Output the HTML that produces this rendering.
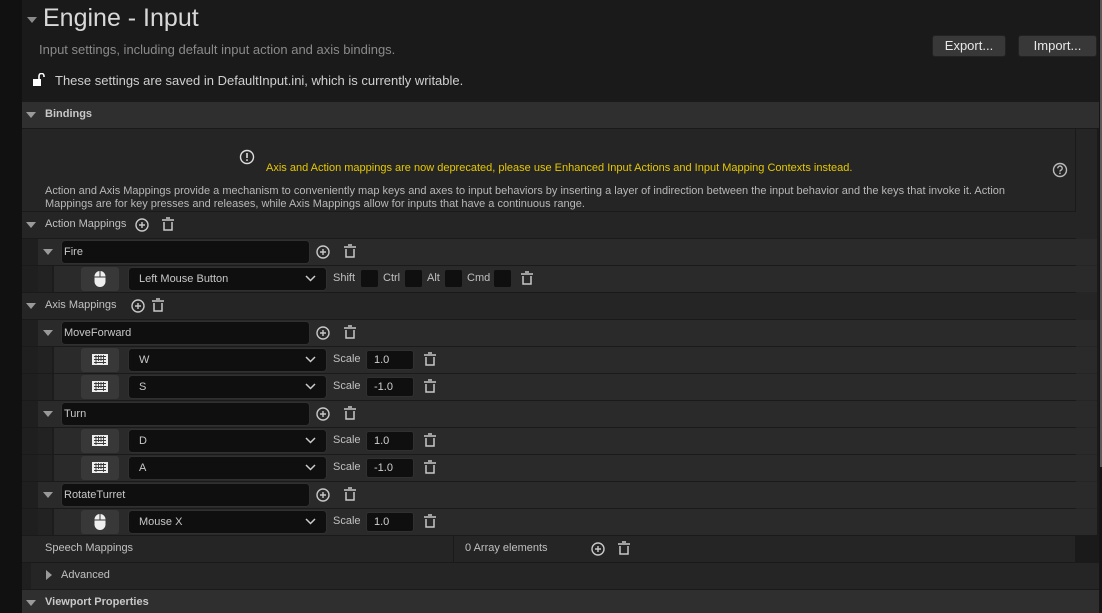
<!DOCTYPE html>
<html><head><style>
*{margin:0;padding:0;box-sizing:border-box}
body{width:1102px;height:613px;background:#1a1a1a;position:relative;overflow:hidden;font-family:"Liberation Sans",sans-serif;color:#c0c0c0;font-size:11px}
.a{position:absolute}
.row{position:absolute;left:22px;width:1075px;height:26px;background:#2a2a2a}
.rd{background:#252525}
.lbl{position:absolute;font-size:11px;color:#c0c0c0;line-height:13px}
.tri{position:absolute;width:0;height:0;border-left:5px solid transparent;border-right:5px solid transparent;border-top:6px solid #9a9a9a}
.tbox{position:absolute;left:61px;width:249px;height:24px;background:#0f0f0f;border-radius:4px;border:1px solid #303030;padding:5px 2px;color:#c8c8c8}
.kb{position:absolute;left:81px;width:38px;height:24px;background:#383838;border-radius:3px}
.dd{position:absolute;left:128px;width:199px;height:24px;background:#0f0f0f;border-radius:4px;border:1px solid #303030;padding:5px 10px;color:#c8c8c8}
.chev{position:absolute;right:10px;top:7px}
.sc{position:absolute;left:366px;width:48px;height:20px;background:#0f0f0f;border-radius:3px;border:1px solid #303030;padding:3px 7px;color:#d0d0d0}
.cb{position:absolute;width:17px;height:17px;background:#0f0f0f;border-radius:2px}
.i1{position:absolute;left:22px;width:16px;height:26px;background:#1f1f1f}
.i2{position:absolute;left:38px;width:16px;height:26px;background:#222;border-right:2px solid #1c1c1c}
</style></head><body>
<div class="a" style="left:0;top:0;width:22px;height:613px;background:#111"></div>
<div class="a" style="left:1099px;top:0;width:3px;height:613px;background:#151515"></div>
<div class="a" style="left:1100px;top:0;width:2px;height:467px;background:#5a5a5a"></div>
<div class="tri" style="left:27px;top:17px;border-top-color:#8a8a8a"></div>
<div class="a" style="left:43px;top:4px;font-size:25px;color:#d8d8d8">Engine - Input</div>
<div class="a" style="left:39px;top:42px;font-size:13px;color:#8a8a8a">Input settings, including default input action and axis bindings.</div>
<div class="a" style="left:32px;top:73px"><svg width="14" height="14" viewBox="0 0 14 14"><rect x="1" y="6" width="8" height="7" fill="#fff"/><path d="M7 6V3a2.5 2.5 0 0 1 5 0v1" stroke="#fff" stroke-width="1.6" fill="none"/></svg></div>
<div class="a" style="left:55px;top:73px;font-size:13px;color:#d0d0d0">These settings are saved in DefaultInput.ini, which is currently writable.</div>
<div class="a" style="left:932px;top:35px;width:74px;height:22px;background:#383838;border:1px solid #222;border-radius:3px;color:#e8e8e8;font-size:13px;text-align:center;line-height:20px">Export...</div>
<div class="a" style="left:1018px;top:35px;width:79px;height:22px;background:#383838;border:1px solid #222;border-radius:3px;color:#e8e8e8;font-size:13px;text-align:center;line-height:20px">Import...</div>

<div class="a" style="left:22px;top:102px;width:1077px;height:26px;background:#2f2f2f"></div>
<div class="tri" style="left:26px;top:112px"></div>
<div class="a" style="left:45px;top:108px;font-weight:bold;color:#c8c8c8">Bindings</div>

<div class="a" style="left:22px;top:129px;width:1053px;height:82px;background:#252525"></div>
<div class="a" style="left:1076px;top:129px;width:21px;height:406px;background:#252525"></div>
<div class="a" style="left:239px;top:149px"><svg width="16" height="16" viewBox="0 0 16 16"><circle cx="8" cy="8" r="6.5" stroke="#ddd" stroke-width="1.4" fill="none"/><rect x="7.2" y="4" width="1.6" height="5" fill="#ddd"/><rect x="7.2" y="10.3" width="1.6" height="1.6" fill="#ddd"/></svg></div>
<div class="a" style="left:266px;top:162px;color:#e6c800">Axis and Action mappings are now deprecated, please use Enhanced Input Actions and Input Mapping Contexts instead.</div>
<div class="a" style="left:1052px;top:162px"><svg width="16" height="16" viewBox="0 0 16 16"><circle cx="8" cy="8" r="6.5" stroke="#bbb" stroke-width="1.4" fill="none"/><path d="M5.8 6.3a2.2 2.2 0 1 1 2.9 2c-.6.3-.7.6-.7 1.3" stroke="#bbb" stroke-width="1.4" fill="none"/><rect x="7.2" y="10.6" width="1.5" height="1.5" fill="#bbb"/></svg></div>
<div class="a" style="left:45px;top:185px;width:1010px;color:#b8b8b8;line-height:13px">Action and Axis Mappings provide a mechanism to conveniently map keys and axes to input behaviors by inserting a layer of indirection between the input behavior and the keys that invoke it. Action Mappings are for key presses and releases, while Axis Mappings allow for inputs that have a continuous range.</div>

<svg width="0" height="0" style="position:absolute"><defs>
<g id="plus"><circle cx="7" cy="7" r="6" stroke="#c8c8c8" stroke-width="1.4" fill="none"/><path d="M7 4v6M4 7h6" stroke="#c8c8c8" stroke-width="1.4"/></g>
<g id="trash"><path d="M1 3h12M5 1h4" stroke="#c8c8c8" stroke-width="1.5"/><path d="M3 5v8h8V5" stroke="#c8c8c8" stroke-width="1.5" fill="none"/></g>
<g id="chev"><path d="M1 1l4.5 4.5L10 1" stroke="#ccc" stroke-width="1.5" fill="none"/></g>
<g id="mouse"><rect x="0.5" y="0" width="11" height="16" rx="5.5" fill="#eee"/><path d="M0 6h12M6 0v6" stroke="#383838" stroke-width="1"/></g>
<g id="kbd"><rect x="0" y="0" width="16" height="11" fill="#eee"/><path d="M2 2.5h12M2 5.5h12M2 8.5h12M4 1v9M6.5 1v6M9 1v6M11.5 1v9" stroke="#383838" stroke-width="0.9"/></g>
</defs></svg>

<div class="row rd" style="top:212px"></div>
<div class="tri" style="left:26px;top:222px"></div>
<div class="lbl" style="left:45px;top:218px">Action Mappings</div>
<svg class="a" style="left:135px;top:218px" width="14" height="14"><use href="#plus"/></svg>
<svg class="a" style="left:161px;top:217px" width="14" height="15"><use href="#trash"/></svg>

<div class="row" style="top:239px"></div><div class="i1" style="top:239px"></div>
<div class="tri" style="left:43px;top:249px"></div>
<div class="tbox" style="top:240px">Fire</div>
<svg class="a" style="left:316px;top:245px" width="14" height="14"><use href="#plus"/></svg>
<svg class="a" style="left:343px;top:244px" width="14" height="15"><use href="#trash"/></svg>

<div class="row" style="top:266px"></div><div class="i1" style="top:266px"></div><div class="i2" style="top:266px"></div>
<div class="kb" style="top:267px"><svg class="a" style="left:13px;top:4px" width="12" height="16"><use href="#mouse"/></svg></div>
<div class="dd" style="top:267px">Left Mouse Button<svg class="chev" width="11" height="7"><use href="#chev"/></svg></div>
<div class="lbl" style="left:333px;top:272px">Shift</div><div class="cb" style="left:361px;top:270px"></div>
<div class="lbl" style="left:383px;top:272px">Ctrl</div><div class="cb" style="left:405px;top:270px"></div>
<div class="lbl" style="left:427px;top:272px">Alt</div><div class="cb" style="left:445px;top:270px"></div>
<div class="lbl" style="left:467px;top:272px">Cmd</div><div class="cb" style="left:494px;top:270px"></div>
<svg class="a" style="left:520px;top:271px" width="14" height="15"><use href="#trash"/></svg>

<div class="row rd" style="top:293px"></div>
<div class="tri" style="left:26px;top:303px"></div>
<div class="lbl" style="left:45px;top:299px">Axis Mappings</div>
<svg class="a" style="left:131px;top:299px" width="14" height="14"><use href="#plus"/></svg>
<svg class="a" style="left:151px;top:298px" width="14" height="15"><use href="#trash"/></svg>

<div class="row" style="top:320px"></div><div class="i1" style="top:320px"></div>
<div class="tri" style="left:43px;top:330px"></div>
<div class="tbox" style="top:321px">MoveForward</div>
<svg class="a" style="left:316px;top:326px" width="14" height="14"><use href="#plus"/></svg>
<svg class="a" style="left:343px;top:325px" width="14" height="15"><use href="#trash"/></svg>

<div class="row" style="top:347px"></div><div class="i1" style="top:347px"></div><div class="i2" style="top:347px"></div>
<div class="kb" style="top:348px"><svg class="a" style="left:11px;top:6px" width="16" height="11"><use href="#kbd"/></svg></div>
<div class="dd" style="top:348px">W<svg class="chev" width="11" height="7"><use href="#chev"/></svg></div>
<div class="lbl" style="left:333px;top:353px">Scale</div><div class="sc" style="left:366px;top:350px">1.0</div>
<svg class="a" style="left:423px;top:352px" width="14" height="15"><use href="#trash"/></svg>

<div class="row" style="top:374px"></div><div class="i1" style="top:374px"></div><div class="i2" style="top:374px"></div>
<div class="kb" style="top:375px"><svg class="a" style="left:11px;top:6px" width="16" height="11"><use href="#kbd"/></svg></div>
<div class="dd" style="top:375px">S<svg class="chev" width="11" height="7"><use href="#chev"/></svg></div>
<div class="lbl" style="left:333px;top:380px">Scale</div><div class="sc" style="left:366px;top:377px">-1.0</div>
<svg class="a" style="left:423px;top:379px" width="14" height="15"><use href="#trash"/></svg>

<div class="row" style="top:401px"></div><div class="i1" style="top:401px"></div>
<div class="tri" style="left:43px;top:411px"></div>
<div class="tbox" style="top:402px">Turn</div>
<svg class="a" style="left:316px;top:407px" width="14" height="14"><use href="#plus"/></svg>
<svg class="a" style="left:343px;top:406px" width="14" height="15"><use href="#trash"/></svg>

<div class="row" style="top:428px"></div><div class="i1" style="top:428px"></div><div class="i2" style="top:428px"></div>
<div class="kb" style="top:429px"><svg class="a" style="left:11px;top:6px" width="16" height="11"><use href="#kbd"/></svg></div>
<div class="dd" style="top:429px">D<svg class="chev" width="11" height="7"><use href="#chev"/></svg></div>
<div class="lbl" style="left:333px;top:434px">Scale</div><div class="sc" style="left:366px;top:431px">1.0</div>
<svg class="a" style="left:423px;top:433px" width="14" height="15"><use href="#trash"/></svg>

<div class="row" style="top:455px"></div><div class="i1" style="top:455px"></div><div class="i2" style="top:455px"></div>
<div class="kb" style="top:456px"><svg class="a" style="left:11px;top:6px" width="16" height="11"><use href="#kbd"/></svg></div>
<div class="dd" style="top:456px">A<svg class="chev" width="11" height="7"><use href="#chev"/></svg></div>
<div class="lbl" style="left:333px;top:461px">Scale</div><div class="sc" style="left:366px;top:458px">-1.0</div>
<svg class="a" style="left:423px;top:460px" width="14" height="15"><use href="#trash"/></svg>

<div class="row" style="top:482px"></div><div class="i1" style="top:482px"></div>
<div class="tri" style="left:43px;top:492px"></div>
<div class="tbox" style="top:483px">RotateTurret</div>
<svg class="a" style="left:316px;top:488px" width="14" height="14"><use href="#plus"/></svg>
<svg class="a" style="left:343px;top:487px" width="14" height="15"><use href="#trash"/></svg>

<div class="row" style="top:509px"></div><div class="i1" style="top:509px"></div><div class="i2" style="top:509px"></div>
<div class="kb" style="top:510px"><svg class="a" style="left:13px;top:4px" width="12" height="16"><use href="#mouse"/></svg></div>
<div class="dd" style="top:510px">Mouse X<svg class="chev" width="11" height="7"><use href="#chev"/></svg></div>
<div class="lbl" style="left:333px;top:515px">Scale</div><div class="sc" style="left:366px;top:512px">1.0</div>
<svg class="a" style="left:423px;top:514px" width="14" height="15"><use href="#trash"/></svg>

<div class="row rd" style="top:536px;width:1053px"></div>
<div class="a" style="left:453px;top:536px;width:1px;height:26px;background:#1a1a1a"></div>
<div class="lbl" style="left:45px;top:542px">Speech Mappings</div>
<div class="lbl" style="left:465px;top:542px">0 Array elements</div>
<svg class="a" style="left:591px;top:542px" width="14" height="14"><use href="#plus"/></svg>
<svg class="a" style="left:617px;top:541px" width="14" height="15"><use href="#trash"/></svg>

<div class="row rd" style="top:563px;width:1077px"></div>
<div class="a" style="left:22px;top:563px;width:9px;height:26px;background:#1f1f1f"></div>
<div class="a" style="left:46px;top:570px;border-top:5px solid transparent;border-bottom:5px solid transparent;border-left:6px solid #9a9a9a"></div>
<div class="lbl" style="left:61px;top:569px">Advanced</div>

<div class="a" style="left:22px;top:590px;width:1077px;height:23px;background:#2f2f2f"></div>
<div class="tri" style="left:26px;top:600px"></div>
<div class="a" style="left:45px;top:596px;font-weight:bold;color:#c8c8c8">Viewport Properties</div>
</body></html>
